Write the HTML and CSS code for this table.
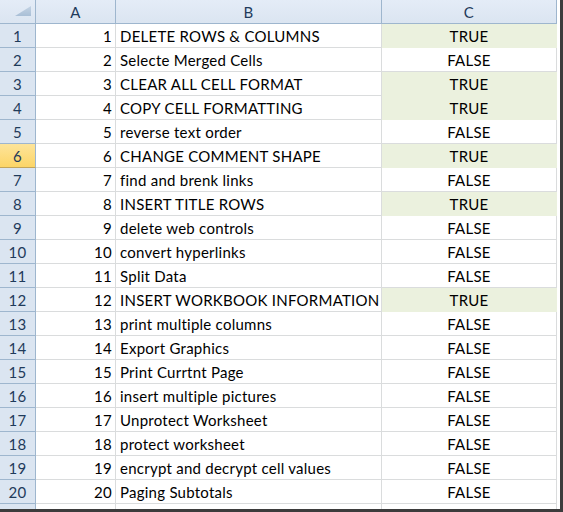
FILE: index.html
```html
<!DOCTYPE html>
<html>
<head>
<meta charset="utf-8">
<link rel="stylesheet" href="styles.css">
</head>
<body>
<div class="frame">
  <div class="sheet">
    <div class="hd corner"><span class="tri"></span></div>
    <div class="hd col">A</div>
    <div class="hd col">B</div>
    <div class="hd col">C</div>

    <div class="rh">1</div><div class="c num">1</div><div class="c txt">DELETE ROWS &amp; COLUMNS</div><div class="c bool hl">TRUE</div>
    <div class="rh">2</div><div class="c num">2</div><div class="c txt">Selecte Merged Cells</div><div class="c bool">FALSE</div>
    <div class="rh">3</div><div class="c num">3</div><div class="c txt">CLEAR ALL CELL FORMAT</div><div class="c bool hl">TRUE</div>
    <div class="rh">4</div><div class="c num">4</div><div class="c txt">COPY CELL FORMATTING</div><div class="c bool hl">TRUE</div>
    <div class="rh">5</div><div class="c num">5</div><div class="c txt">reverse text order</div><div class="c bool">FALSE</div>
    <div class="rh sel">6</div><div class="c num">6</div><div class="c txt">CHANGE COMMENT SHAPE</div><div class="c bool hl">TRUE</div>
    <div class="rh">7</div><div class="c num">7</div><div class="c txt">find and brenk links</div><div class="c bool">FALSE</div>
    <div class="rh">8</div><div class="c num">8</div><div class="c txt">INSERT TITLE ROWS</div><div class="c bool hl">TRUE</div>
    <div class="rh">9</div><div class="c num">9</div><div class="c txt">delete web controls</div><div class="c bool">FALSE</div>
    <div class="rh">10</div><div class="c num">10</div><div class="c txt">convert hyperlinks</div><div class="c bool">FALSE</div>
    <div class="rh">11</div><div class="c num">11</div><div class="c txt">Split Data</div><div class="c bool">FALSE</div>
    <div class="rh">12</div><div class="c num">12</div><div class="c txt">INSERT WORKBOOK INFORMATION</div><div class="c bool hl">TRUE</div>
    <div class="rh">13</div><div class="c num">13</div><div class="c txt">print multiple columns</div><div class="c bool">FALSE</div>
    <div class="rh">14</div><div class="c num">14</div><div class="c txt">Export Graphics</div><div class="c bool">FALSE</div>
    <div class="rh">15</div><div class="c num">15</div><div class="c txt">Print Currtnt Page</div><div class="c bool">FALSE</div>
    <div class="rh">16</div><div class="c num">16</div><div class="c txt">insert multiple pictures</div><div class="c bool">FALSE</div>
    <div class="rh">17</div><div class="c num">17</div><div class="c txt">Unprotect Worksheet</div><div class="c bool">FALSE</div>
    <div class="rh">18</div><div class="c num">18</div><div class="c txt">protect worksheet</div><div class="c bool">FALSE</div>
    <div class="rh">19</div><div class="c num">19</div><div class="c txt">encrypt and decrypt cell values</div><div class="c bool">FALSE</div>
    <div class="rh">20</div><div class="c num">20</div><div class="c txt">Paging Subtotals</div><div class="c bool">FALSE</div>

    <div class="rh part"></div><div class="c part"></div><div class="c part"></div><div class="c part"></div>
  </div>
</div>
</body>
</html>
```

FILE: styles.css
```css
html, body {
  margin: 0;
  padding: 0;
  background: #ffffff;
}

.frame {
  width: 560px;
  height: 509px;
  background: #ffffff;
  border-right: 3px solid #3c3c3c;
  border-bottom: 3px solid #3c3c3c;
  overflow: hidden;
}

.sheet {
  display: grid;
  grid-template-columns: 36px 80px 266px 175px;
  grid-template-rows: 24px repeat(20, 24px) 5px;
  font-family: Lato, "Liberation Sans", sans-serif;
  font-size: 15px;
  letter-spacing: 0.25px;
  color: #000000;
}

.sheet > div {
  box-sizing: border-box;
  border-right: 1px solid #dadcdd;
  border-bottom: 1px solid #dadcdd;
  display: flex;
  align-items: flex-end;
  padding-bottom: 2px;
  white-space: nowrap;
  overflow: hidden;
}

.sheet > .hd {
  background: linear-gradient(#e4ecf7, #dbe5f1);
  border-right-color: #9eb6ce;
  border-bottom-color: #9eb6ce;
  color: #1f3b5b;
  justify-content: center;
  align-items: center;
  padding-bottom: 0;
  padding-top: 1px;
}

.corner {
  position: relative;
}

.tri {
  position: absolute;
  left: 15px;
  top: 6px;
  width: 16px;
  height: 10px;
  background: linear-gradient(#c3d3e4, #a9bfd6);
  clip-path: polygon(100% 0, 100% 100%, 0 100%);
}

.sheet > .rh {
  background: #dbe5f1;
  border-right-color: #9eb6ce;
  border-bottom-color: #9eb6ce;
  color: #1f3b5b;
  justify-content: center;
}

.sheet > .rh.sel {
  background: linear-gradient(#fde49a, #fcd567);
  border-bottom-color: #c2a55a;
}

.num {
  justify-content: flex-end;
  padding-right: 3px;
}

.txt {
  padding-left: 4px;
}

.bool {
  justify-content: center;
}

.sheet > .hl {
  background: #ebf1de;
  border-right-color: #ebf1de;
  border-bottom-color: #ebf1de;
}

.sheet > .part {
  border-bottom: none;
}
```
